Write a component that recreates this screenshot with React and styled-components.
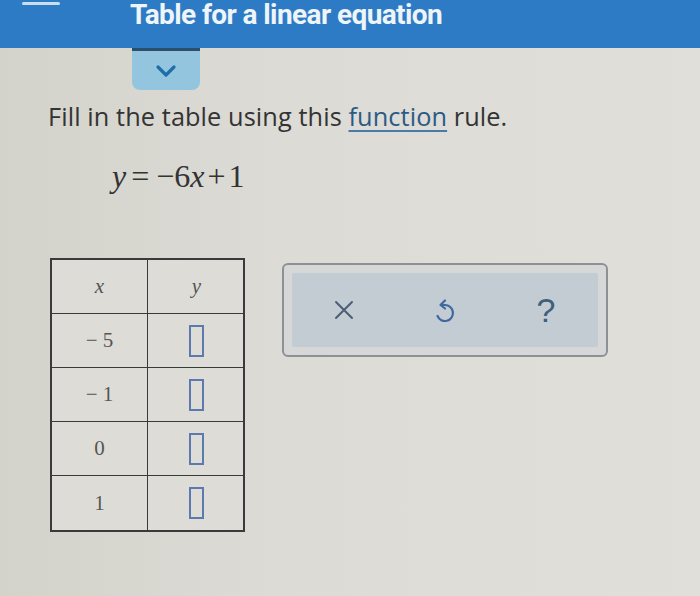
import React from "react";
import styled, { createGlobalStyle } from "styled-components";

const Global = createGlobalStyle`
  html, body { margin: 0; padding: 0; }
  body { width: 700px; height: 596px; overflow: hidden; background: #d8d7d1; font-family: "Open Sans", "Liberation Sans", sans-serif; }
`;

const Page = styled.div`
  width: 700px;
  height: 596px;
  background: linear-gradient(90deg, #d3d2cb 0%, #dcdbd5 40%, #e0dfda 100%);
  display: flex;
  flex-direction: column;
`;

const Header = styled.header`
  height: 48px;
  background: #2d7bc4;
  display: flex;
  align-items: flex-start;
  box-sizing: border-box;
`;

const Burger = styled.div`
  width: 38px;
  height: 3px;
  margin: 2px 0 0 22px;
  background: #c8ddef;
  border-radius: 2px;
`;

const Title = styled.h1`
  margin: 0 0 0 70px;
  font-family: "Roboto", "Liberation Sans", sans-serif;
  font-weight: 700;
  font-size: 28px;
  line-height: 30px;
  letter-spacing: -0.6px;
  color: #eef4f8;
`;

const Tab = styled.div`
  width: 68px;
  height: 42px;
  margin-left: 132px;
  background: #93c6de;
  border-top: 3px solid #2a4f6c;
  border-radius: 0 0 8px 8px;
  display: flex;
  align-items: center;
  justify-content: center;
  box-sizing: border-box;
`;

const Prompt = styled.p`
  margin: 9px 0 0 48px;
  font-size: 25.3px;
  line-height: 34px;
  color: #333;
  letter-spacing: 0.1px;
`;

const Link = styled.span`
  color: #2a5a86;
  text-decoration: underline;
  text-decoration-color: #4a7aa8;
  text-underline-offset: 4px;
`;

const Equation = styled.div`
  display: flex;
  align-items: baseline;
  margin: 26px 0 0 112px;
  font-family: "Liberation Serif", "DejaVu Serif", serif;
  font-size: 32px;
  line-height: 34px;
  color: #333;
`;

const Var = styled.i``;

const Op = styled.span`
  margin-left: ${(p) => p.$l}px;
  margin-right: ${(p) => p.$r}px;
`;

const Work = styled.div`
  display: flex;
  align-items: flex-start;
  margin: 65px 0 0 50px;
  gap: 37px;
`;

const Table = styled.div`
  display: grid;
  grid-template-columns: 96px 97px;
  grid-auto-rows: 54px;
  border: 2px solid #3a3a3a;
  width: 195px;
  box-sizing: border-box;
  background: #dddcd6;
`;

const Cell = styled.div`
  display: flex;
  align-items: center;
  justify-content: center;
  border-right: ${(p) => (p.$last ? "none" : "1.5px solid #3a3a3a")};
  border-bottom: ${(p) => (p.$bottom ? "none" : "1.5px solid #3a3a3a")};
  font-family: "Liberation Serif", "DejaVu Serif", serif;
  font-size: 21px;
  color: #555;
  font-style: ${(p) => (p.$italic ? "italic" : "normal")};
`;

const Input = styled.div`
  width: 15px;
  height: 32px;
  border: 2px solid #5c79b0;
  box-sizing: border-box;
`;

const Panel = styled.div`
  margin-top: 5px;
  width: 326px;
  height: 94px;
  border: 2px solid #8d9196;
  border-radius: 6px;
  box-sizing: border-box;
  padding: 8px;
  background: #d6d8d8;
`;

const PanelInner = styled.div`
  height: 100%;
  background: #c3cbd3;
  border-radius: 2px;
  display: flex;
  align-items: center;
  justify-content: center;
  gap: 61px;
`;

const IconBtn = styled.div`
  width: 40px;
  display: flex;
  justify-content: center;
  color: #4a6a85;
`;

const Q = styled.span`
  font-family: "Liberation Sans", sans-serif;
  font-size: 34px;
  color: #3f5f7c;
  line-height: 1;
`;

const rows = ["\u2212 5", "\u2212 1", "0", "1"];

export default function App() {
  return (
    <>
      <Global />
      <Page>
        <Header>
          <Burger />
          <Title>Table for a linear equation</Title>
        </Header>
        <Tab>
          <svg width="22" height="14" viewBox="0 0 22 14">
            <path d="M3 3 L11 11 L19 3" fill="none" stroke="#1f6ea8" strokeWidth="3.2" strokeLinecap="round" strokeLinejoin="round" />
          </svg>
        </Tab>
        <Prompt>
          Fill in the table using this <Link>function</Link> rule.
        </Prompt>
        <Equation>
          <Var>y</Var>
          <Op $l={5} $r={7}>=</Op>
          <span>{"\u22126"}</span>
          <Var>x</Var>
          <Op $l={3} $r={3}>+</Op>
          <span>1</span>
        </Equation>
        <Work>
          <Table>
            <Cell $italic>x</Cell>
            <Cell $italic $last>y</Cell>
            {rows.map((r, i) => (
              <React.Fragment key={r}>
                <Cell $bottom={i === rows.length - 1}>{r}</Cell>
                <Cell $last $bottom={i === rows.length - 1}>
                  <Input />
                </Cell>
              </React.Fragment>
            ))}
          </Table>
          <Panel>
            <PanelInner>
              <IconBtn>
                <svg width="22" height="22" viewBox="0 0 22 22">
                  <path d="M3 3 L19 19 M19 3 L3 19" stroke="#4a5f74" strokeWidth="2" strokeLinecap="round" />
                </svg>
              </IconBtn>
              <IconBtn>
                <svg width="20" height="28" viewBox="0 0 20 28">
                  <path d="M6 9 H10 A8 8 0 1 1 2.5 20" fill="none" stroke="#3e68a0" strokeWidth="2.2" strokeLinecap="round" />
                  <path d="M10 4.5 L5.5 9 L10 12.5" fill="none" stroke="#3e68a0" strokeWidth="2.2" strokeLinecap="round" strokeLinejoin="round" />
                </svg>
              </IconBtn>
              <IconBtn>
                <Q>?</Q>
              </IconBtn>
            </PanelInner>
          </Panel>
        </Work>
      </Page>
    </>
  );
}
